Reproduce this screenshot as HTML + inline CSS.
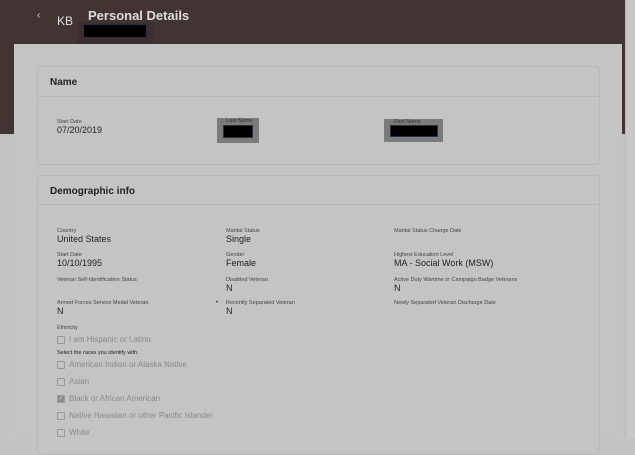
<!DOCTYPE html>
<html><head><style>
*{margin:0;padding:0;box-sizing:border-box}
body{width:635px;height:438px;overflow:hidden;background:#c4c3c3;font-family:"Liberation Sans",sans-serif;position:relative}
.hdr{position:absolute;left:0;top:0;width:625px;height:134px;background:#433434}
.rs{position:absolute;left:625px;top:0;width:10px;height:438px;background:#c9c8c8;border-left:1px solid #b8b7b7}
.panel{position:absolute;left:14px;top:44px;width:608px;height:394px;background:#c5c4c4}
.card{position:absolute;left:37px;width:563px;border:1px solid #b9b8b8;border-radius:4px;background:#c5c4c4}
.ch{height:30px;border-bottom:1px solid #b9b8b8;font-weight:bold;font-size:10px;color:#222;padding:10px 0 0 12px}
.t{position:absolute;color:#2a2a2a;white-space:nowrap}
.l{font-size:5.5px;color:#444}
.v{font-size:9px;color:#222}
.cb{position:absolute;left:57px;width:8px;height:8px;border:1px solid #999;border-radius:1px}
.cl{position:absolute;left:69px;font-size:8px;color:#8a8a8a}
</style></head><body>
<div class="hdr"></div>
<div class="rs"></div>
<div class="t" style="left:37px;top:10px;color:#ddd;font-size:10px">&#8249;</div>
<div class="t" style="left:57px;top:14px;color:#ddd;font-size:12px">KB</div>
<div class="t" style="left:88px;top:8px;color:#ddd;font-size:13px;font-weight:bold;line-height:16px">Personal Details</div>
<div style="position:absolute;left:77px;top:23px;width:76px;height:21px;background:#3a2e2e"></div>
<div style="position:absolute;left:83px;top:24px;width:64px;height:14px;background:#000;border:1px solid #234"></div>
<div class="panel"></div>
<div class="card" style="top:66px;height:99px"><div class="ch">Name</div></div>
<div class="t l" style="left:57px;top:119px">Start Date</div>
<div class="t v" style="left:57px;top:125px">07/20/2019</div>
<div style="position:absolute;left:217px;top:118px;width:42px;height:25px;background:#7c7b7b"></div>
<div class="t l" style="left:226px;top:118px;color:#333">Last Name</div>
<div style="position:absolute;left:223px;top:125px;width:30px;height:13px;background:#000;border:1px solid #234"></div>
<div style="position:absolute;left:384px;top:119px;width:59px;height:23px;background:#7c7b7b"></div>
<div class="t l" style="left:394px;top:119px;color:#333">First Name</div>
<div style="position:absolute;left:390px;top:125px;width:48px;height:12px;background:#000;border:1px solid #234"></div>
<div class="card" style="top:175px;height:280px"><div class="ch" style="height:29px">Demographic info</div></div>
<div class="t l" style="left:57px;top:228px">Country</div><div class="t v" style="left:57px;top:234px">United States</div>
<div class="t l" style="left:226px;top:228px">Marital Status</div><div class="t v" style="left:226px;top:234px">Single</div>
<div class="t l" style="left:394px;top:228px">Marital Status Change Date</div>
<div class="t l" style="left:57px;top:252px">Start Date</div><div class="t v" style="left:57px;top:258px">10/10/1995</div>
<div class="t l" style="left:226px;top:252px">Gender</div><div class="t v" style="left:226px;top:258px">Female</div>
<div class="t l" style="left:394px;top:252px">Highest Education Level</div><div class="t v" style="left:394px;top:258px">MA - Social Work (MSW)</div>
<div class="t l" style="left:57px;top:277px">Veteran Self-Identification Status</div>
<div class="t l" style="left:226px;top:277px">Disabled Veteran</div><div class="t v" style="left:226px;top:283px">N</div>
<div class="t l" style="left:394px;top:277px">Active Duty Wartime or Campaign Badge Veterans</div><div class="t v" style="left:394px;top:283px">N</div>
<div class="t l" style="left:57px;top:300px">Armed Forces Service Medal Veteran</div><div class="t v" style="left:57px;top:306px">N</div>
<div class="t" style="left:216px;top:300px;font-size:6px">•</div>
<div class="t l" style="left:226px;top:300px">Recently Separated Veteran</div><div class="t v" style="left:226px;top:306px">N</div>
<div class="t l" style="left:394px;top:300px">Newly Separated Veteran Discharge Date</div>
<div class="t l" style="left:57px;top:325px">Ethnicity</div>
<div class="cb" style="top:336px"></div><div class="cl" style="top:335px">I am Hispanic or Latino.</div>
<div class="t l" style="left:57px;top:350px;color:#222">Select the races you identify with.</div>
<div class="cb" style="top:361px"></div><div class="cl" style="top:360px">American Indian or Alaska Native</div>
<div class="cb" style="top:378px"></div><div class="cl" style="top:377px">Asian</div>
<div class="cb" style="top:395px;background:#8a8a8a;color:#ddd;font-size:6px;line-height:6px;text-align:center">✓</div><div class="cl" style="top:394px">Black or African American</div>
<div class="cb" style="top:412px"></div><div class="cl" style="top:411px">Native Hawaiian or other Pacific Islander</div>
<div class="cb" style="top:429px"></div><div class="cl" style="top:428px">White</div>
</body></html>
